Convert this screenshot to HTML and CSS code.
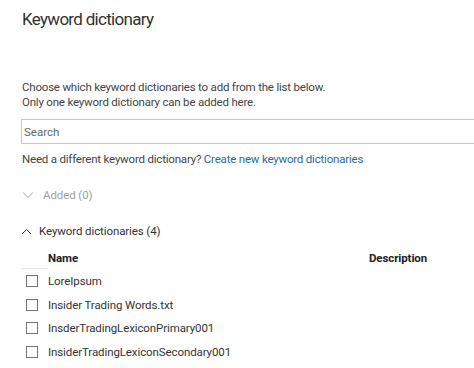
FILE: index.html
```html
<!DOCTYPE html>
<html lang="en">
<head>
    <meta charset="UTF-8">
    <meta name="viewport" content="width=device-width, initial-scale=1.0">
    <title>Keyword dictionary</title>
    <link rel="stylesheet" href="styles.css">
</head>
<body>
    <div class="panel">
        <h1 class="title">Keyword dictionary</h1>

        <p class="intro">Choose which keyword dictionaries to add from the list below.<br>Only one keyword dictionary can be added here.</p>

        <input class="search" type="text" placeholder="Search">

        <p class="hint">Need a different keyword dictionary? <a href="#">Create new keyword dictionaries</a></p>

        <div class="group group-muted">
            <svg class="chevron" width="12" height="8" viewBox="0 0 12 8"><path d="M1 1.5 L6 6.5 L11 1.5" fill="none" stroke="currentColor" stroke-width="1"/></svg>
            <span>Added (0)</span>
        </div>

        <div class="group group-open">
            <svg class="chevron" width="11" height="7" viewBox="0 0 11 7"><path d="M1 6 L5.5 1.5 L10 6" fill="none" stroke="currentColor" stroke-width="1"/></svg>
            <span>Keyword dictionaries (4)</span>
        </div>

        <div class="list">
            <div class="row head">
                <span class="check-col"></span>
                <span class="name">Name</span>
                <span class="desc">Description</span>
            </div>
            <div class="row">
                <span class="check-col"><span class="box"></span></span>
                <span class="name">LoreIpsum</span>
            </div>
            <div class="row">
                <span class="check-col"><span class="box"></span></span>
                <span class="name">Insider Trading Words.txt</span>
            </div>
            <div class="row">
                <span class="check-col"><span class="box"></span></span>
                <span class="name">InsderTradingLexiconPrimary001</span>
            </div>
            <div class="row">
                <span class="check-col"><span class="box"></span></span>
                <span class="name">InsiderTradingLexiconSecondary001</span>
            </div>
        </div>
    </div>
</body>
</html>
```

FILE: styles.css
```css
body {
    font-family: Roboto, "Open Sans", sans-serif;
    margin: 0;
    padding: 0;
    background-color: #fff;
    color: #333;
    overflow: hidden;
}

.panel {
    padding: 6px 0 0 22px;
}

.title {
    font-size: 17px;
    font-weight: 400;
    letter-spacing: -0.7px;
    color: #323130;
    margin: 0 0 48px 0;
    line-height: 26px;
}

.intro {
    font-size: 11.5px;
    letter-spacing: -0.2px;
    line-height: 15px;
    margin: 0 0 9px 0;
    color: #444;
}

.search {
    display: block;
    width: calc(100% + 1px);
    height: 25px;
    padding: 0 2px;
    margin: 0 0 8px -1px;
    border: 1px solid #c8c8c8;
    border-right: none;
    font-family: inherit;
    font-size: 11.5px;
    box-sizing: border-box;
}

.search::placeholder {
    color: #666;
}

.hint {
    font-size: 11.5px;
    letter-spacing: -0.2px;
    line-height: 15px;
    margin: 0 0 20px 0;
    color: #444;
}

.hint a {
    color: #2b6b9c;
    text-decoration: none;
}

.group {
    display: flex;
    align-items: center;
    font-size: 11.5px;
    letter-spacing: -0.1px;
    height: 16px;
}

.group-muted {
    color: #a0a0a0;
    margin-bottom: 20px;
}

.group-muted .chevron {
    margin-right: 9px;
}

.group-open {
    color: #333;
    margin-bottom: 7px;
}

.group-open .chevron {
    margin-left: -1px;
    margin-right: 7px;
}

.list {
    font-size: 11.5px;
    letter-spacing: -0.1px;
}

.row {
    display: flex;
    align-items: center;
    height: 23.7px;
}

.row.head {
    height: 23px;
    font-weight: 700;
    color: #222;
}

.check-col {
    width: 26px;
    flex: none;
    display: flex;
    align-items: center;
    padding-left: 4px;
    box-sizing: border-box;
    height: 100%;
}

.row.head .check-col {
    border-bottom: 1px solid #e6e6e6;
    height: 12px;
    align-self: flex-end;
}

.name {
    width: 321px;
}

.box {
    width: 10px;
    height: 10px;
    border: 1px solid #777;
    display: block;
}
```
